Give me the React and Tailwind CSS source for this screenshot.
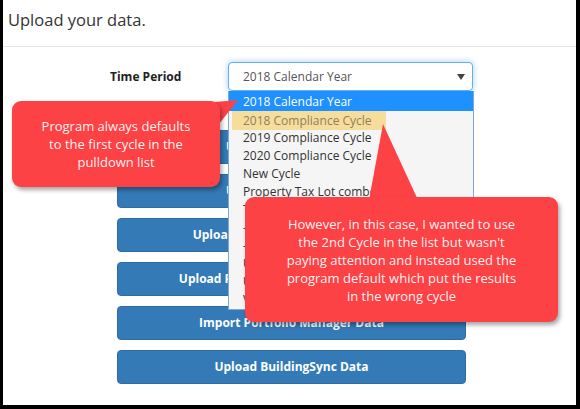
import React from 'react';

const cycles = [
  '2018 Calendar Year',
  '2018 Compliance Cycle',
  '2019 Compliance Cycle',
  '2020 Compliance Cycle',
  'New Cycle',
  'Property Tax Lot combo',
  'Test Cycle',
  '-- Archive 2016 --',
  '-- Archive 2017 --',
  'Upload Cycle A',
  'Upload Cycle B',
  'Verification Cycle',
];

const buttons = [
  'Upload a Spreadsheet',
  'Upload a Spreadsheet',
  'Upload Green Button Meter Data',
  'Upload Portfolio Manager Meter Data',
  'Import Portfolio Manager Data',
  'Upload BuildingSync Data',
];

export default function App() {
  return (
    <div
      className="relative w-[580px] h-[409px] overflow-hidden bg-white border-l-[3px] border-r-[4px] border-b-[4px] border-black text-[#333]"
      style={{ fontFamily: '"Open Sans", "Noto Sans", sans-serif' }}
    >
      {/* header */}
      <div className="h-[47px] flex items-center px-[5px] border-b border-[#e5e5e5]">
        <h3 className="text-[16.5px] leading-none -mt-[6px]">Upload your data.</h3>
      </div>

      {/* time period row */}
      <div className="flex items-start pt-[15px] pl-[107px]">
        <label className="w-[118px] pt-[6px] text-[12px] font-bold text-[#222]">Time Period</label>
        <div className="relative w-[245px]">
          <div className="h-[29px] flex items-center justify-between px-[14px] pr-[7px] rounded-[4px] border border-[#66afe9] shadow-[0_0_6px_rgba(102,175,233,0.6)] bg-white text-[12px] text-[#555]">
            <span>2018 Calendar Year</span>
            <svg width="8" height="6" viewBox="0 0 8 6"><path d="M0 0h8L4 6z" fill="#444" /></svg>
          </div>

          {/* open dropdown */}
          <ul className="absolute left-0 top-[29px] z-10 w-[246px] bg-[#f5f5f5] border border-t-0 border-[#7ea7dc] text-[12px] text-[#333]">
            {cycles.map((c, i) => (
              <li
                key={i}
                className={`leading-[18px] pl-[14px] whitespace-nowrap ${i === 0 ? 'h-[20px] pt-[2px] bg-[#1e90ff] text-white' : 'h-[18px]'}`}
              >
                {i === 1 ? (
                  <span className="-ml-[11px] pl-[11px] pr-[14px] inline-block h-[19px] leading-[19px] bg-[#f6dd9c] text-[#8f7f5f]">{c}</span>
                ) : (
                  c
                )}
              </li>
            ))}
          </ul>
        </div>
      </div>

      {/* upload buttons */}
      <div className="flex flex-col gap-[10px] mt-[39px] ml-[114px] w-[349px]">
        {buttons.map((b, i) => (
          <button
            key={i}
            className="h-[34px] rounded-[4px] bg-[#337ab7] border border-[#2e6da4] text-white text-[12px] font-bold"
          >
            {b}
          </button>
        ))}
      </div>

      {/* callout tails */}
      <svg className="absolute left-0 top-0 z-20 pointer-events-none" width="580" height="409">
        <polygon points="203,103 219,124 238,100" fill="#fd4246" transform="translate(-3,0)" />
        <polygon points="369,200 418,200 383,124" fill="#fd4246" transform="translate(-3,0)" />
      </svg>

      {/* callout 1 */}
      <div className="absolute left-[9px] top-[101px] z-20 w-[208px] h-[86px] rounded-[9px] bg-[#fd4246] shadow-[2px_3px_4px_rgba(0,0,0,0.35)] flex items-center justify-center text-center text-[13px] leading-[18px] text-white/95">
        <p>
          Program always defaults
          <br />
          to the first cycle in the
          <br />
          pulldown list
        </p>
      </div>

      {/* callout 2 */}
      <div className="absolute left-[242px] top-[197px] z-20 w-[313px] h-[125px] rounded-[9px] bg-[#fd4246] shadow-[2px_3px_4px_rgba(0,0,0,0.35)] flex items-center justify-center text-center text-[13px] leading-[18px] text-white/95">
        <p>
          However, in this case, I wanted to use
          <br />
          the 2nd Cycle in the list but wasn't
          <br />
          paying attention and instead used the
          <br />
          program default which put the results
          <br />
          in the wrong cycle
        </p>
      </div>
    </div>
  );
}
